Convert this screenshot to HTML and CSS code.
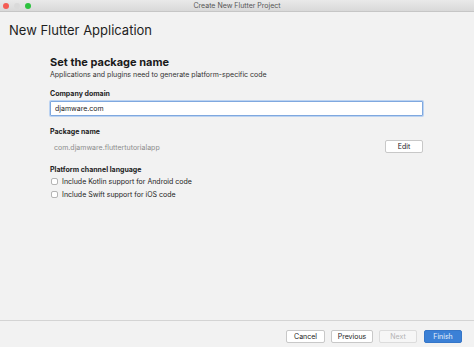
FILE: index.html
```html
<!DOCTYPE html>
<html>
<head>
  <title>Create New Flutter Project</title>
  <link rel="stylesheet" href="styles.css">
</head>
<body>
  <div class="window">
    <div class="titlebar">
      <div class="luces">
        <span class="luz roja"></span>
        <span class="luz gris"></span>
        <span class="luz verde"></span>
      </div>
      <div class="titulo">Create New Flutter Project</div>
    </div>

    <h1 class="encabezado">New Flutter Application</h1>

    <div class="contenido">
      <h2>Set the package name</h2>
      <div class="descripcion">Applications and plugins need to generate platform-specific code</div>

      <label class="etiqueta">Company domain</label>
      <input type="text" class="campo" value="djamware.com">

      <label class="etiqueta etiqueta-paquete">Package name</label>
      <div class="fila-paquete">
        <span class="paquete">com.djamware.fluttertutorialapp</span>
        <button class="boton boton-edit">Edit</button>
      </div>

      <label class="etiqueta etiqueta-plataforma">Platform channel language</label>
      <div class="opcion"><span class="check"></span>Include Kotlin support for Android code</div>
      <div class="opcion"><span class="check"></span>Include Swift support for iOS code</div>
    </div>

    <div class="pie">
      <button class="boton">Cancel</button>
      <button class="boton boton-previous">Previous</button>
      <button class="boton boton-next" disabled>Next</button>
      <button class="boton boton-finish">Finish</button>
    </div>
  </div>
</body>
</html>
```

FILE: styles.css
```css
body {
  margin: 0;
  font-family: Inter, "Noto Sans", sans-serif;
  color: #222222;
  background-color: #f2f2f2;
}
.window {
  width: 474px;
  height: 347px;
  display: flex;
  flex-direction: column;
  background-color: #f2f2f2;
  overflow: hidden;
}
.titlebar {
  height: 11px;
  flex: none;
  display: flex;
  align-items: center;
  background: linear-gradient(#e9e9e9, #d9d9d9);
  border-bottom: 1px solid #c6c6c6;
  position: relative;
}
.luces {
  display: flex;
  gap: 5px;
  padding-left: 3px;
}
.luz {
  width: 6px;
  height: 6px;
  border-radius: 50%;
}
.roja {
  background-color: #f45c54;
}
.gris {
  background-color: #dadada;
}
.verde {
  background-color: #2cc23e;
}
.titulo {
  position: absolute;
  left: 0;
  right: 0;
  text-align: center;
  font-size: 7px;
  color: #555555;
}
.encabezado {
  margin: 10px 0 0 9px;
  font-size: 13px;
  line-height: 16px;
  font-weight: 400;
  color: #1e1e1e;
}
.contenido {
  flex: 1;
  padding: 0 51px 0 50px;
  display: flex;
  flex-direction: column;
}
h2 {
  margin: 17px 0 0 0;
  font-size: 11px;
  line-height: 14px;
  font-weight: 700;
  color: #1a1a1a;
}
.descripcion {
  margin-top: 1px;
  font-size: 7px;
  line-height: 10px;
  color: #333333;
}
.etiqueta {
  margin-top: 9px;
  font-size: 7px;
  line-height: 10px;
  font-weight: 700;
  color: #222222;
}
.campo {
  margin: 2px 0 0 0;
  height: 15px;
  box-sizing: border-box;
  padding: 0 4px;
  border: 1px solid #7fa8df;
  box-shadow: 0 0 0 1px #bcd3f1;
  border-radius: 1px;
  background-color: #ffffff;
  font-family: inherit;
  font-size: 7px;
  color: #222222;
  outline: none;
}
.etiqueta-paquete {
  margin-top: 11px;
}
.fila-paquete {
  margin-top: 3px;
  height: 13px;
  display: flex;
  align-items: center;
  justify-content: space-between;
}
.paquete {
  padding-left: 4px;
  padding-top: 2px;
  font-size: 7px;
  color: #8c8c8c;
}
.boton {
  height: 13px;
  box-sizing: border-box;
  padding: 0;
  border: 1px solid #c8c8c8;
  border-radius: 2px;
  background-color: #ffffff;
  font-family: inherit;
  font-size: 7px;
  color: #222222;
  width: 39px;
}
.boton-edit {
  width: 38px;
}
.etiqueta-plataforma {
  margin-top: 12px;
}
.opcion {
  height: 13px;
  display: flex;
  align-items: center;
  font-size: 7px;
  color: #222222;
}
.check {
  width: 7px;
  height: 7px;
  box-sizing: border-box;
  margin: 0 4px 0 1px;
  border: 1px solid #b5b5b5;
  border-radius: 2px;
  background-color: #ffffff;
}
.opcion:first-of-type {
  margin-top: 2px;
}
.pie {
  height: 27px;
  flex: none;
  box-sizing: border-box;
  border-top: 1px solid #d4d4d4;
  display: flex;
  justify-content: flex-end;
  align-items: flex-start;
  gap: 6px;
  padding: 9px 12px 0 0;
}
.boton-previous {
  width: 42px;
}
.boton-next {
  width: 38px;
  margin-right: 1px;
  background-color: #f6f6f6;
  border-color: #dcdcdc;
  color: #b4b4b4;
}
.boton-finish {
  width: 38px;
  background-color: #3b80d6;
  border-color: #3676c8;
  color: #e8f0fb;
}
```
